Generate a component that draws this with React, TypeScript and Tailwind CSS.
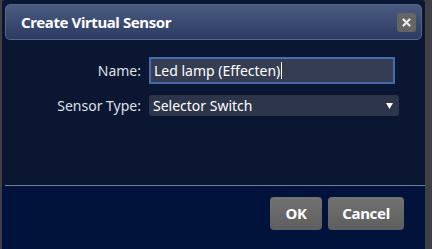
import * as React from "react";

export default function App() {
  return (
    <div
      className="w-[432px] h-[249px] bg-[#3e4045] flex overflow-hidden"
      style={{ fontFamily: '"Noto Sans", "Open Sans", sans-serif' }}
    >
      <div className="ml-[2px] w-[423px] h-full bg-[#0b1633] flex flex-col pt-[4px] rounded-t-[3px]">
        {/* header */}
        <div className="mx-[3px] h-[36px] rounded-[5px] border border-[#56668a] bg-gradient-to-b from-[#4a5b82] to-[#2c3b62] flex items-center justify-between pl-[15px] pr-[5px]">
          <span className="text-[15px] font-bold text-white tracking-[-0.4px] pt-[1px]">
            Create Virtual Sensor
          </span>
          <button className="w-[19px] h-[19px] rounded-[3px] bg-[#656565] flex items-center justify-center">
            <svg width="9" height="9" viewBox="0 0 9 9">
              <path d="M1.5 1.5L7.5 7.5M7.5 1.5L1.5 7.5" stroke="#ececec" strokeWidth="2.2" strokeLinecap="round" />
            </svg>
          </button>
        </div>

        {/* form */}
        <div className="flex flex-col pt-[17px] gap-[11px] h-[145px]">
          <div className="flex items-center">
            <label className="w-[139px] text-right text-[14px] text-[#dde0e6]">Name:</label>
            <div className="ml-[8px] w-[246px] h-[27px] border-[2px] border-[#4a6aaf] bg-[#353d52] flex items-center pl-[3px]">
              <span className="text-[14px] text-white">Led lamp (Effecten)</span>
              <span className="w-[1px] h-[17px] bg-white ml-[1px]" />
            </div>
          </div>
          <div className="flex items-center">
            <label className="w-[139px] text-right text-[14px] text-[#dde0e6]">Sensor Type:</label>
            <div className="ml-[8px] w-[250px] h-[21px] rounded-[3px] bg-[#2c3549] flex items-center justify-between pl-[4px] pr-[6px]">
              <span className="text-[14px] text-white">Selector Switch</span>
              <svg width="7" height="6" viewBox="0 0 7 6">
                <path d="M0 0H7L3.5 6Z" fill="#ffffff" />
              </svg>
            </div>
          </div>
        </div>

        <div className="ml-[3px] h-[1px] bg-[#6f7f9d]" />

        {/* footer */}
        <div className="flex-1 bg-[#01133a] flex justify-end items-start pt-[11px] pr-[21px] gap-[6px]">
          <button className="w-[52px] h-[33px] rounded-[4px] bg-gradient-to-b from-[#727272] to-[#5e5e5e] text-white font-bold text-[15px] tracking-[-0.3px]">
            OK
          </button>
          <button className="w-[76px] h-[33px] rounded-[4px] bg-gradient-to-b from-[#727272] to-[#5e5e5e] text-white font-bold text-[15px] tracking-[-0.3px]">
            Cancel
          </button>
        </div>
      </div>
    </div>
  );
}
